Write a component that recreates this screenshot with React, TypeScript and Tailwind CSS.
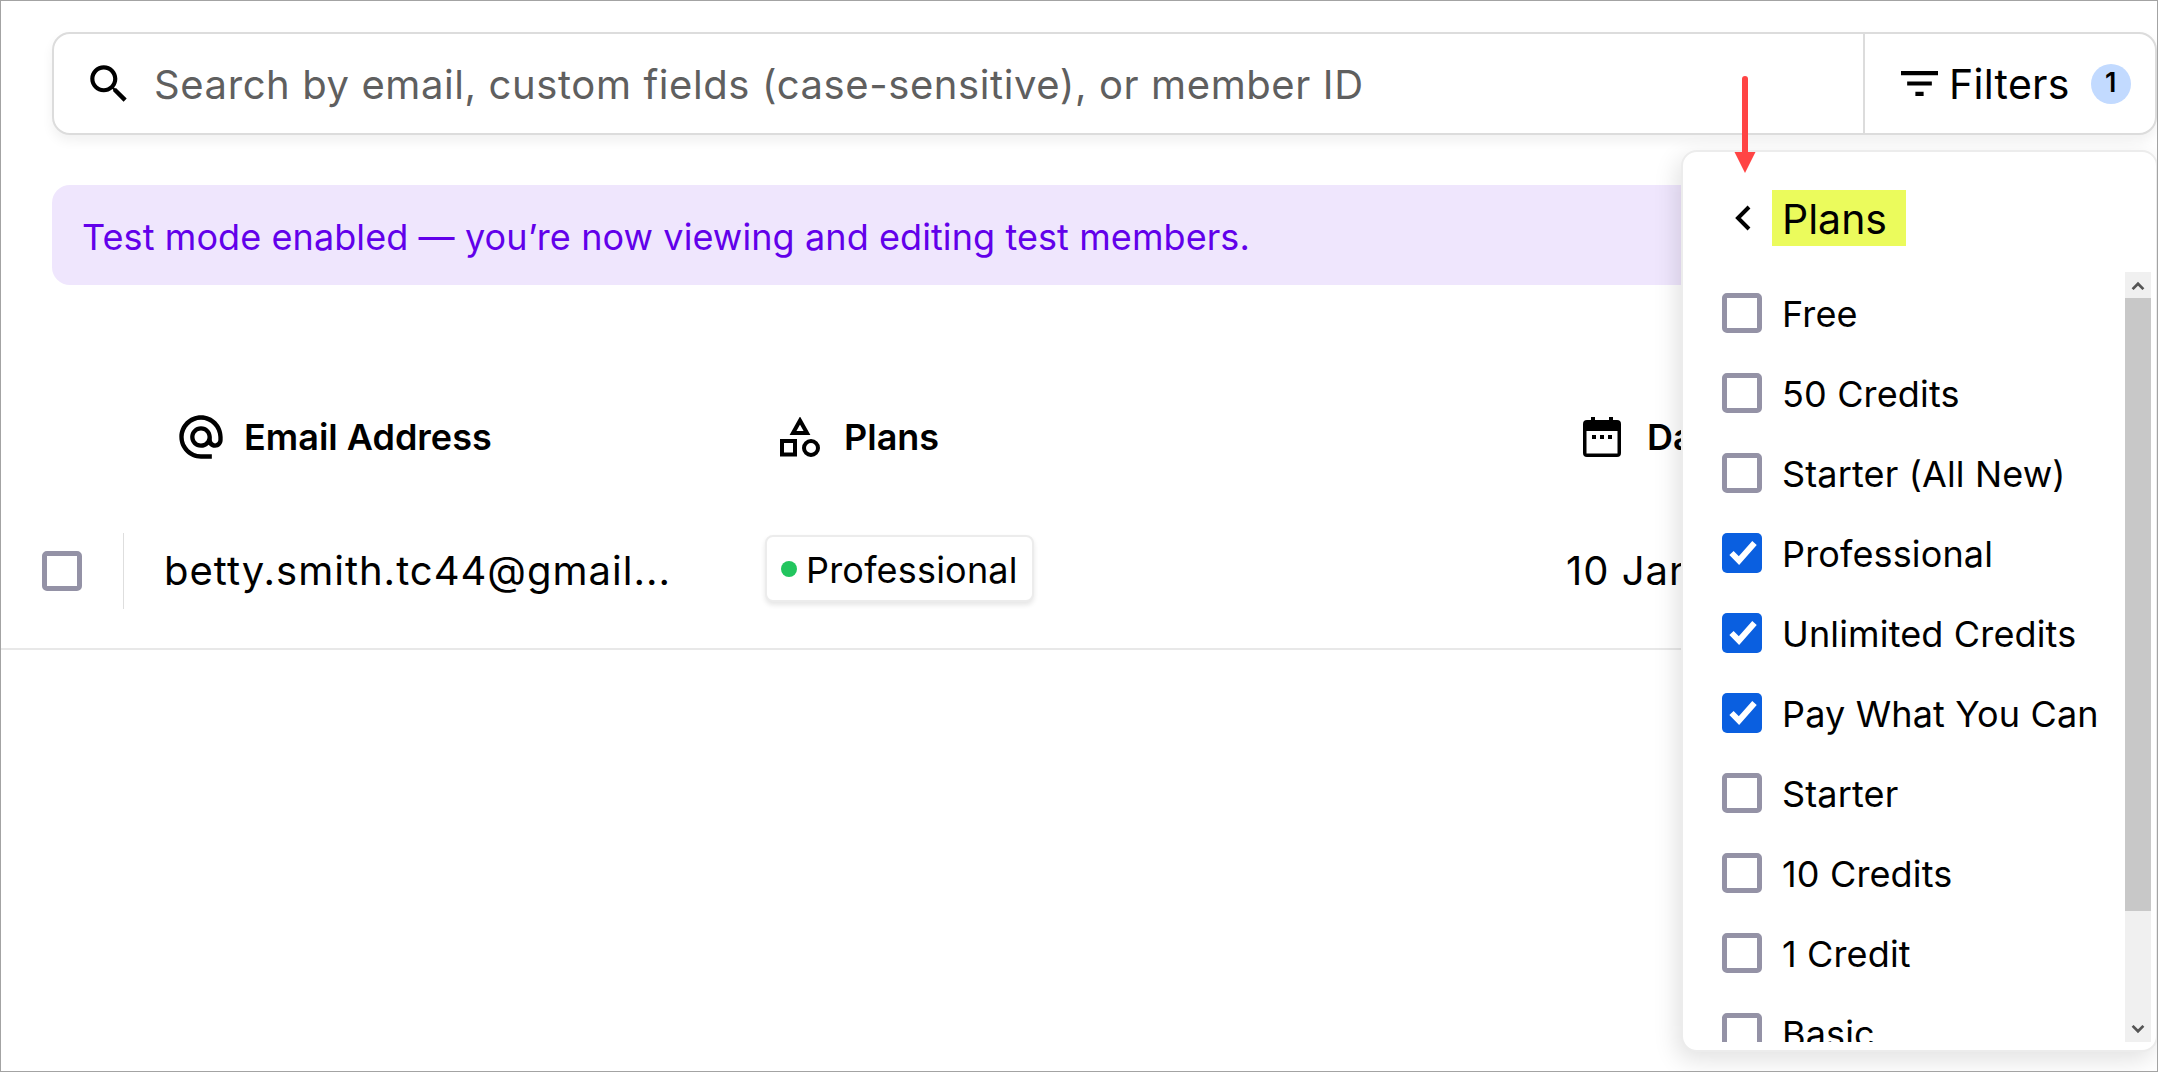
const plans = [
  { label: "Free", checked: false },
  { label: "50 Credits", checked: false },
  { label: "Starter (All New)", checked: false },
  { label: "Professional", checked: true },
  { label: "Unlimited Credits", checked: true },
  { label: "Pay What You Can", checked: true },
  { label: "Starter", checked: false },
  { label: "10 Credits", checked: false },
  { label: "1 Credit", checked: false },
  { label: "Basic", checked: false },
];

function Checkbox({ checked = false }: { checked?: boolean }) {
  if (checked) {
    return (
      <span className="flex h-10 w-10 shrink-0 items-center justify-center rounded-[5px] bg-[#0a5fe0]">
        <svg viewBox="0 0 40 40" className="h-10 w-10">
          <path d="M9.500 20l7.500 7.500L32.500 10" fill="none" stroke="#fff" strokeWidth="6" />
        </svg>
      </span>
    );
  }
  return <span className="h-10 w-10 shrink-0 rounded-[5px] border-[5px] border-[#9492a6] bg-white" />;
}

function SearchIcon() {
  return (
    <svg viewBox="0 0 24 24" className="h-[50px] w-[50px] shrink-0">
      <path d="M15.5 14h-.79l-.28-.27C15.41 12.59 16 11.11 16 9.5 16 5.91 13.09 3 9.5 3S3 5.91 3 9.5 5.91 16 9.5 16c1.61 0 3.09-.59 4.23-1.57l.27.28v.79l5 4.99L20.49 19l-4.99-5zm-6 0C7.01 14 5 11.99 5 9.5S7.01 5 9.5 5 14 7.01 14 9.5 11.99 14 9.5 14z" />
    </svg>
  );
}

function AtIcon() {
  return (
    <svg viewBox="0 0 24 24" className="h-[52px] w-[52px] shrink-0">
      <path d="M12 2C6.48 2 2 6.48 2 12s4.48 10 10 10h5v-2h-5c-4.34 0-8-3.66-8-8s3.66-8 8-8 8 3.66 8 8v1.43c0 .79-.71 1.57-1.5 1.57s-1.5-.78-1.5-1.57V12c0-2.76-2.24-5-5-5s-5 2.24-5 5 2.24 5 5 5c1.38 0 2.64-.56 3.54-1.47.65.89 1.77 1.47 2.96 1.47 1.97 0 3.5-1.6 3.5-3.57V12c0-5.52-4.48-10-10-10zm0 13c-1.66 0-3-1.34-3-3s1.34-3 3-3 3 1.34 3 3-1.34 3-3 3z" />
    </svg>
  );
}

function ShapesIcon() {
  return (
    <svg viewBox="0 0 40 40" className="h-10 w-10 shrink-0" fill="none" stroke="#000" strokeWidth="4">
      <path d="M20 3.500L27 16H13z" strokeLinejoin="miter" />
      <rect x="2" y="24" width="13" height="13.5" />
      <circle cx="31" cy="31" r="7" />
    </svg>
  );
}

function CalendarIcon() {
  return (
    <svg viewBox="0 0 38 40" className="h-10 w-[38px] shrink-0">
      <rect x="8" y="0" width="4" height="6" />
      <rect x="26" y="0" width="4" height="6" />
      <path d="M4 3h30a4 4 0 0 1 4 4v29a4 4 0 0 1-4 4H4a4 4 0 0 1-4-4V7a4 4 0 0 1 4-4zm-.5 11v22.500h31V14z" fillRule="evenodd" />
      <rect x="9" y="18" width="4" height="4" />
      <rect x="17" y="18" width="4" height="4" />
      <rect x="25" y="18" width="4" height="4" />
    </svg>
  );
}

function FilterIcon() {
  return (
    <svg viewBox="3 6 18 12" className="h-[25px] w-[37px] shrink-0" preserveAspectRatio="none">
      <path d="M10 18h4v-2h-4v2zM3 6v2h18V6H3zm3 7h12v-2H6v2z" />
    </svg>
  );
}

export default function App() {
  return (
    <div className="relative h-[1072px] w-[2158px] overflow-hidden border border-[#a3a3a3] bg-white font-['Inter',sans-serif] text-black">
      <div className="pl-[51px] pt-[31px]">
        <div className="flex h-[103px] items-center rounded-[18px] border-2 border-[#dcdcdc] bg-white shadow-[0_6px_12px_rgba(0,0,0,0.06)]">
          <div className="flex flex-1 items-center pl-[30px]">
            <SearchIcon />
            <span className="ml-[20px] pt-[2px] text-[40px] tracking-[0.6px] text-[#5f5f5f]">
              Search by email, custom fields (case-sensitive), or member ID
            </span>
          </div>
          <div className="flex h-full w-[292px] items-center border-l-2 border-[#dcdcdc] pl-[36px]">
            <FilterIcon />
            <span className="ml-[11px] pt-[2px] text-[41px] tracking-[0.3px]">Filters</span>
            <span className="ml-[21px] flex h-10 w-10 items-center justify-center rounded-full bg-[#c2daff] text-[27px] font-semibold">
              1
            </span>
          </div>
        </div>

        <div className="mt-[50px] flex h-[100px] items-center rounded-[18px] bg-[#efe6fd] pl-[30px] pt-[3px] text-[36px] tracking-[0.09px] text-[#6200ea]">
          Test mode enabled — you’re now viewing and editing test members.
        </div>
      </div>

      <div className="mt-[128px] flex h-[48px] items-center text-[36px] font-semibold">
        <div className="flex w-[767px] items-center pl-[174px]">
          <AtIcon />
          <span className="ml-[17px]">Email Address</span>
        </div>
        <div className="flex w-[800px] items-center pl-[12px]">
          <ShapesIcon />
          <span className="ml-[24px]">Plans</span>
        </div>
        <div className="flex items-center pl-[15px]">
          <CalendarIcon />
          <span className="ml-[26px]">Date Added</span>
        </div>
      </div>

      <div className="mt-[72px] flex h-[117px] items-start border-b-2 border-[#e8e8e8] text-[40px] tracking-[1px]">
        <div className="flex h-[76px] w-[123px] items-center border-r border-[#dedede] pl-[41px]">
          <Checkbox />
        </div>
        <div className="flex h-[76px] w-[641px] items-center pl-[40px]">betty.smith.tc44@gmail...</div>
        <div className="flex h-[76px] items-center">
          <span className="mb-[5px] flex h-[67px] w-[269px] items-center rounded-[8px] border-2 border-[#ececec] bg-white pl-[14px] text-[36px] tracking-[0.2px] shadow-[0_3px_5px_rgba(0,0,0,0.1)]">
            <span className="h-4 w-4 rounded-full bg-[#22c55e]" />
            <span className="ml-[9px] pt-[3px]">Professional</span>
          </span>
        </div>
        <div className="flex h-[76px] items-center pl-[532px]">10 Jan 2024</div>
      </div>

      {/* annotation + dropdown lie over the table */}
      <div className="absolute left-[1680px] top-[149px] flex h-[902px] w-[477px] flex-col overflow-hidden rounded-[16px] border-2 border-[#ececec] bg-white shadow-[-4px_8px_24px_rgba(0,0,0,0.12)]">
        <div className="flex h-[120px] shrink-0 items-start pl-[52px] pt-[38px]">
          <svg viewBox="0 0 16 26" className="mt-[15px] h-[26px] w-4" fill="none" stroke="#000" strokeWidth="4">
            <path d="M14 2L3 13l11 11" />
          </svg>
          <span className="ml-[21px] flex h-[56px] w-[134px] items-center bg-[#ebfb5c] pl-[10px] pt-[3px] text-[41px]">Plans</span>
        </div>
        <div className="flex h-[770px] shrink-0 pr-[5px]">
          <div className="flex-1 overflow-hidden pl-[39px] pt-[21px]">
            <div className="flex flex-col gap-[40px]">
              {plans.map((plan) => (
                <div key={plan.label} className="flex h-10 items-center gap-[20px] text-[36px] tracking-[0.15px] whitespace-nowrap">
                  <Checkbox checked={plan.checked} />
                  <span className="pt-[2px]">{plan.label}</span>
                </div>
              ))}
            </div>
          </div>
          <div className="flex w-[26px] shrink-0 flex-col bg-[#f0f0f0]">
            <div className="flex h-[26px] items-center justify-center">
              <svg viewBox="0 0 14 10" className="h-[9px] w-[14px]" fill="none" stroke="#555" strokeWidth="3">
                <path d="M1 9l6-6 6 6" />
              </svg>
            </div>
            <div className="h-[613px] bg-[#c8c8c8]" />
            <div className="flex flex-1 items-end justify-center pb-[8px]">
              <svg viewBox="0 0 14 10" className="h-[9px] w-[14px]" fill="none" stroke="#555" strokeWidth="3">
                <path d="M1 1l6 6 6-6" />
              </svg>
            </div>
          </div>
        </div>
      </div>

      <svg viewBox="0 0 22 98" className="absolute left-[1733px] top-[75px] h-[98px] w-[22px]">
        <path d="M11 3v74" stroke="#ff4444" strokeWidth="6" strokeLinecap="round" />
        <path d="M0.500 76h21L11 97z" fill="#ff4444" />
      </svg>
    </div>
  );
}
